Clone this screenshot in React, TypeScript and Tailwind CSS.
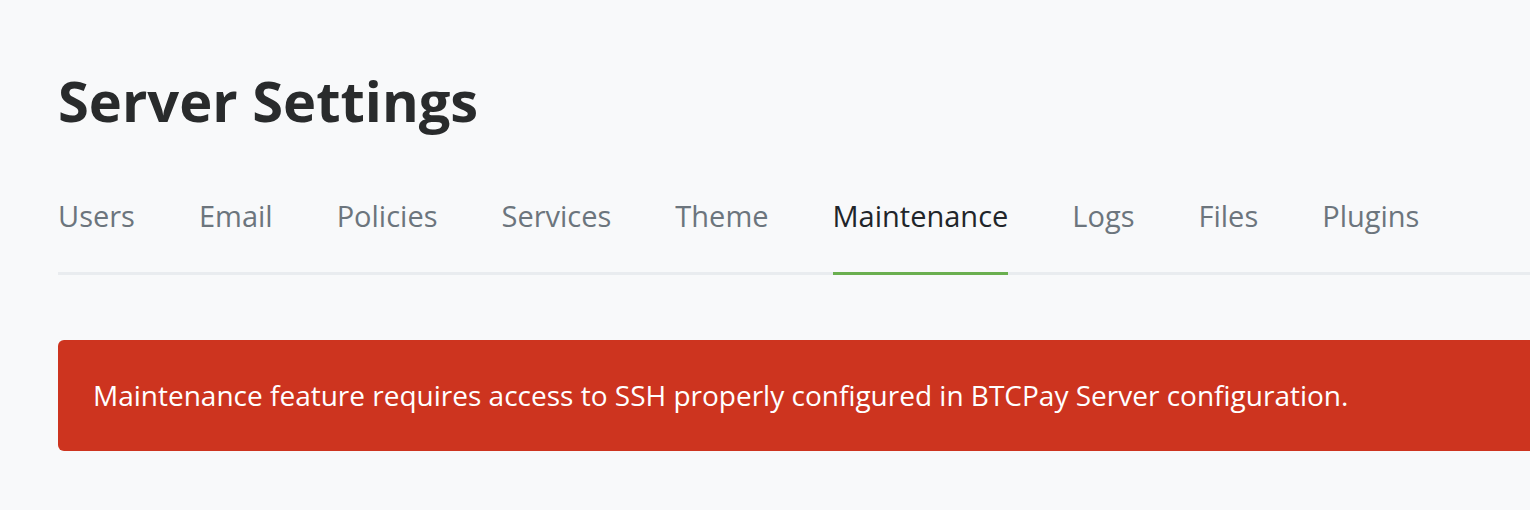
const tabs = ['Users', 'Email', 'Policies', 'Services', 'Theme', 'Maintenance', 'Logs', 'Files', 'Plugins']

export default function App() {
  return (
    <div className="h-[510px] w-full overflow-hidden bg-[#f8f9fa] font-['Open_Sans',sans-serif]">
      <div className="pl-[58px] w-[1600px]">
        <h1 className="pt-[64px] text-[56px] leading-[72px] font-bold text-[#292b2c]">Server Settings</h1>
        <nav className="mt-[60px] flex border-b-[3px] border-[#e9ecef]">
          {tabs.map((t) => (
            <a
              key={t}
              className={
                t === 'Maintenance'
                  ? 'mr-[64px] -mb-[3px] border-b-[3px] border-[#6aaf4f] pb-[36px] text-[29px] leading-[40px] text-[#212529]'
                  : 'mr-[64px] -mb-[3px] border-b-[3px] border-transparent pb-[36px] text-[29px] leading-[40px] text-[#6c757d]'
              }
            >
              {t}
            </a>
          ))}
        </nav>
        <div className="mt-[65px] rounded-[6px] bg-[#cd341f] px-[35px] py-[36px] text-[28px] leading-[39px] text-white">
          Maintenance feature requires access to SSH properly configured in BTCPay Server configuration.
        </div>
      </div>
    </div>
  )
}
